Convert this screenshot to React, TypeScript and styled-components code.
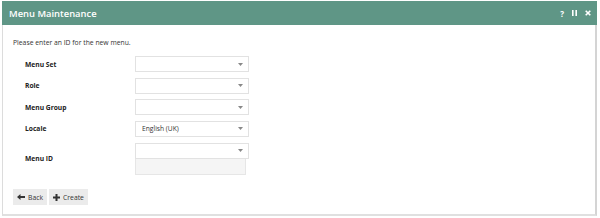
import styled, { createGlobalStyle } from 'styled-components';

const GlobalStyle = createGlobalStyle`
  body {
    margin: 0;
    background: #ffffff;
    font-family: "Open Sans", "Liberation Sans", sans-serif;
  }
`;

const fields = [
  { label: 'Menu Set', value: '' },
  { label: 'Role', value: '' },
  { label: 'Menu Group', value: '' },
  { label: 'Locale', value: 'English (UK)' },
];

function Arrow() {
  return (
    <svg width="5" height="3" viewBox="0 0 5 3">
      <path d="M0 0 H5 L2.5 3 Z" fill="#888" />
    </svg>
  );
}

function App() {
  return (
    <>
      <GlobalStyle />
      <Panel>
        <Header>
          <Title>Menu Maintenance</Title>
          <HeaderTools>
            <Tool>?</Tool>
            <Tool>
              <svg width="5" height="6" viewBox="0 0 5 6">
                <rect x="0" y="0" width="1.6" height="6" fill="#fff" />
                <rect x="3.4" y="0" width="1.6" height="6" fill="#fff" />
              </svg>
            </Tool>
            <Tool>
              <svg width="6" height="6" viewBox="0 0 6 6">
                <path d="M0.7 0.7 L5.3 5.3 M5.3 0.7 L0.7 5.3" stroke="#fff" strokeWidth="1.6" />
              </svg>
            </Tool>
          </HeaderTools>
        </Header>
        <Body>
          <Intro>Please enter an ID for the new menu.</Intro>
          <Form>
            {fields.map((f) => (
              <Row key={f.label}>
                <Label>{f.label}</Label>
                <Select>
                  <span>{f.value}</span>
                  <Arrow />
                </Select>
              </Row>
            ))}
            <Row $tall>
              <Label>Menu ID</Label>
              <Stack>
                <Select>
                  <span />
                  <Arrow />
                </Select>
                <TextBox />
              </Stack>
            </Row>
          </Form>
          <Buttons>
            <Button>
              <svg width="8" height="6" viewBox="0 0 8 6">
                <path d="M0 3 L3.5 0 V2 H8 V4 H3.5 V6 Z" fill="#333" />
              </svg>
              Back
            </Button>
            <Button>
              <svg width="7" height="7" viewBox="0 0 7 7">
                <path d="M2.5 0 H4.5 V2.5 H7 V4.5 H4.5 V7 H2.5 V4.5 H0 V2.5 H2.5 Z" fill="#333" />
              </svg>
              Create
            </Button>
          </Buttons>
        </Body>
      </Panel>
    </>
  );
}

const Panel = styled.div`
  margin: 1px 3px 0 2px;
  height: 215px;
  box-sizing: border-box;
  border: 1px solid #dcdcdc;
  border-right: 2px solid #d4d4d4;
  border-bottom: 2px solid #e0e0e0;
  background: #fff;
  display: flex;
  flex-direction: column;
`;

const Header = styled.div`
  height: 24px;
  margin: -1px -2px 0 -1px;
  background: #5f9686;
  display: flex;
  align-items: center;
  justify-content: space-between;
  padding: 0 6px 0 7px;
`;

const Title = styled.span`
  color: #fff;
  font-size: 9.4px;
  font-weight: 600;
`;

const HeaderTools = styled.div`
  display: flex;
  align-items: center;
  gap: 8px;
`;

const Tool = styled.span`
  color: #fff;
  font-size: 8px;
  font-weight: 700;
  display: flex;
  align-items: center;
`;

const Body = styled.div`
  padding: 13px 10px 0 10px;
`;

const Intro = styled.div`
  font-size: 6.8px;
  color: #333;
`;

const Form = styled.div`
  margin-top: 9px;
  display: flex;
  flex-direction: column;
  gap: 5px;
`;

const Row = styled.div<{ $tall?: boolean }>`
  display: flex;
  align-items: center;
  padding-left: 12px;
  height: ${(p) => (p.$tall ? '31px' : '16.5px')};
  margin-top: ${(p) => (p.$tall ? '1px' : '0')};
`;

const Label = styled.div`
  width: 110px;
  font-size: 6.7px;
  font-weight: 700;
  color: #222;
`;

const Stack = styled.div`
  display: flex;
  flex-direction: column;
`;

const Select = styled.div`
  width: 114px;
  height: 16px;
  box-sizing: border-box;
  border: 1px solid #e2e2e2;
  background: #fff;
  display: flex;
  align-items: center;
  justify-content: space-between;
  padding: 0 5px 0 6px;
  font-size: 6.7px;
  color: #333;
`;

const TextBox = styled.div`
  width: 111px;
  height: 16px;
  box-sizing: border-box;
  border: 1px solid #e6e6e6;
  border-top: none;
  background: #f5f5f5;
`;

const Buttons = styled.div`
  margin-top: 15px;
  display: flex;
  gap: 2px;
`;

const Button = styled.div`
  height: 16px;
  padding: 0 4px 0 4px;
  display: flex;
  align-items: center;
  gap: 3px;
  background: #ebebeb;
  font-size: 6.8px;
  color: #333;
`;

export default App;
